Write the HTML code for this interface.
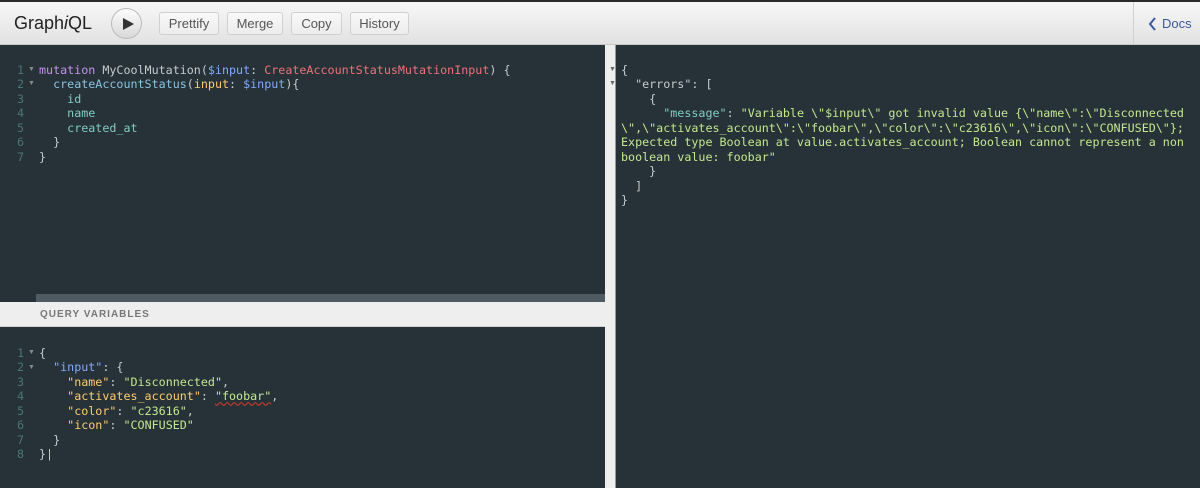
<!DOCTYPE html>
<html><head><style>
*{margin:0;padding:0;box-sizing:border-box}
body{width:1200px;height:488px;overflow:hidden;background:#263238;font-family:"Liberation Sans",sans-serif;position:relative}
.top{position:absolute;left:0;top:0;width:1200px;height:45px;background:linear-gradient(#f7f7f7,#e2e2e2);border-top:2px solid #2b2b2b;border-bottom:1px solid #c8c8c8}
.title{position:absolute;left:14px;top:11px;font-size:18px;color:#222}
.run{position:absolute;left:111px;top:6px;width:31px;height:31px;border-radius:50%;background:linear-gradient(#fdfdfd,#d8d8d8);border:1px solid #bbb}
.run:after{content:"";position:absolute;left:11px;top:9px;border-left:11px solid #333;border-top:6px solid transparent;border-bottom:6px solid transparent}
.btn{position:absolute;top:10px;height:23px;border:1px solid #d0d0d0;border-radius:3px;background:linear-gradient(#f9f9f9,#ececec);font-size:13px;color:#555;text-align:center;line-height:21px}
.docs{position:absolute;left:1133px;top:0;width:67px;height:43px;border-left:1px solid #d0d0d0;color:#3b5998;font-size:13px;line-height:43px;padding-left:28px}
.docs svg{position:absolute;left:14px;top:15px}
.code{position:absolute;font-family:"DejaVu Sans Mono",monospace;font-size:11.7px;line-height:14.45px;white-space:pre;color:#c4cbd0}
.ln{position:absolute;font-family:"DejaVu Sans Mono",monospace;font-size:11.7px;line-height:14.45px;white-space:pre;color:#4b7571;text-align:right;width:24px}
.fold{position:absolute;font-size:7px;color:#7f8c8d}
.k{color:#c792ea}.v{color:#82aaff}.t{color:#f07178}.f{color:#80cbc4}.a{color:#ffcb6b}.s{color:#c3e88d}.p{color:#89c4e0}
</style></head><body>
<div class="top">
<div class="title">Graph<i>i</i>QL</div>
<div class="run"></div>
<div class="btn" style="left:159px;width:60px">Prettify</div>
<div class="btn" style="left:227px;width:56px">Merge</div>
<div class="btn" style="left:291px;width:51px">Copy</div>
<div class="btn" style="left:350px;width:59px">History</div>
<div class="docs"><svg width="9" height="14" viewBox="0 0 9 14"><path d="M7 1L2 7l5 6" stroke="#3b5998" stroke-width="2" fill="none"/></svg>Docs</div>
</div>

<div class="ln" style="left:0;top:63px">1
2
3
4
5
6
7</div>
<div class="fold" style="left:28px;top:66px">▼</div>
<div class="fold" style="left:28px;top:80px">▼</div>
<div class="code" style="left:39px;top:63px"><span class="k">mutation</span> MyCoolMutation(<span class="v">$input</span>: <span class="t">CreateAccountStatusMutationInput</span>) {
  <span class="p">createAccountStatus</span>(<span class="a">input</span>: <span class="v">$input</span>){
    <span class="f">id</span>
    <span class="f">name</span>
    <span class="f">created_at</span>
  }
}</div>

<div style="position:absolute;left:36px;top:294px;width:570px;height:8px;background:#4f5b62"></div>
<div style="position:absolute;left:0;top:302px;width:606px;height:25px;background:#eeeeee;border-bottom:1px solid #d0d0d0;font-size:10px;letter-spacing:1px;font-weight:bold;color:#777;line-height:25px;padding-left:40px">QUERY VARIABLES</div>

<div class="ln" style="left:0;top:346px">1
2
3
4
5
6
7
8</div>
<div class="fold" style="left:28px;top:349px">▼</div>
<div class="fold" style="left:28px;top:364px">▼</div>
<div class="code" style="left:39px;top:346px">{
  <span class="v">"input"</span>: {
    <span class="a">"name"</span>: <span class="s">"Disconnected"</span>,
    <span class="a">"activates_account"</span>: <span class="s" style="text-decoration:underline wavy #c0392b">"foobar"</span>,
    <span class="a">"color"</span>: <span class="s">"c23616"</span>,
    <span class="a">"icon"</span>: <span class="s">"CONFUSED"</span>
  }
}|</div>

<div style="position:absolute;left:605px;top:45px;width:11px;height:443px;background:#eeeeee;border-right:1px solid #999"></div>

<div class="fold" style="left:609px;top:66px;color:#666">▼</div>
<div class="fold" style="left:609px;top:80px;color:#666">▼</div>
<div class="code" style="left:621px;top:63px">{
  "errors": [
    {
      <span class="f">"message"</span>: <span class="s">"Variable \"$input\" got invalid value {\"name\":\"Disconnected</span>
<span class="s">\",\"activates_account\":\"foobar\",\"color\":\"c23616\",\"icon\":\"CONFUSED\"};</span>
<span class="s">Expected type Boolean at value.activates_account; Boolean cannot represent a non</span>
<span class="s">boolean value: foobar"</span>
    }
  ]
}</div>
</body></html>
